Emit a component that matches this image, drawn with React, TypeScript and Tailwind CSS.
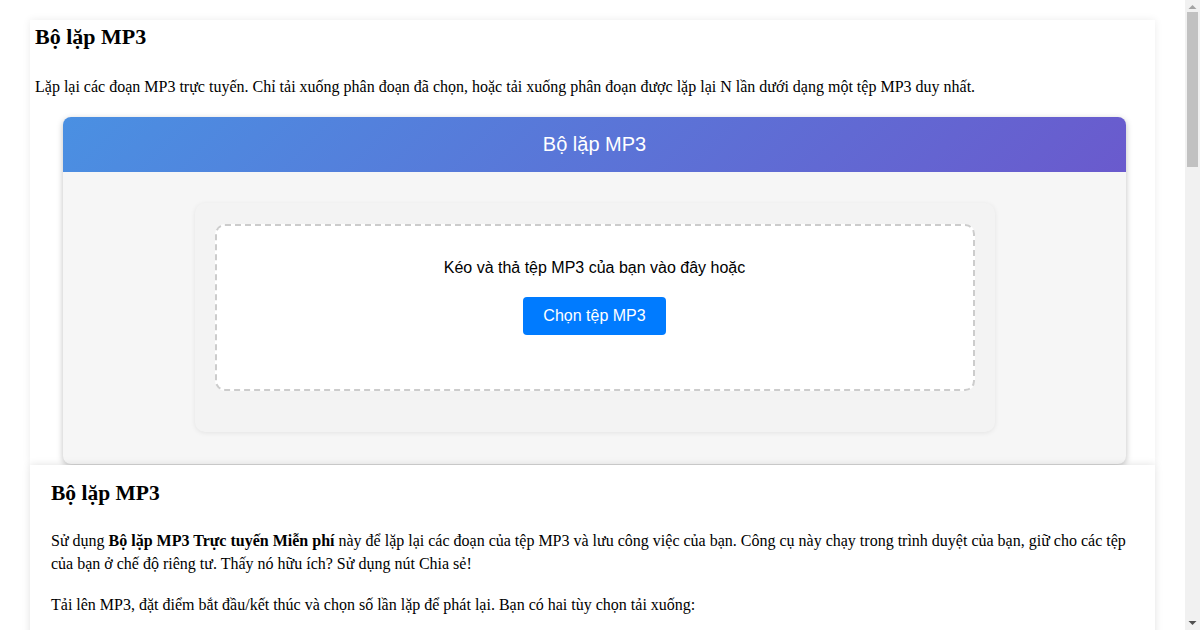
function ScrollGutter() {
  return (
    <div className="flex h-screen w-[15px] shrink-0 flex-col items-center bg-[#f1f1f1]">
      <svg width="9" height="12" viewBox="0 0 9 12" className="shrink-0">
        <path d="M0.5 9 L4.5 5 L8.5 9 Z" fill="#a3a3a3" />
      </svg>
      <div className="h-[155px] w-[11px] shrink-0 bg-[#c1c1c1]" />
      <div className="flex-1" />
      <svg width="9" height="12" viewBox="0 0 9 12" className="shrink-0">
        <path d="M0.5 3 L4.5 7 L8.5 3 Z" fill="#505050" />
      </svg>
    </div>
  );
}

export default function App() {
  return (
    <div className="flex h-screen bg-white font-['Liberation_Serif',serif] text-black">
      <div className="h-screen flex-1 overflow-y-auto [scrollbar-width:none]">
        <div className="pt-[20px] pb-[40px]">
          {/* Tool section */}
          <section className="mx-auto w-[1125px] bg-white px-[5px] pt-[3px] pb-[1px] shadow-[0_0_8px_rgba(0,0,0,0.08)]">
            <h2 className="text-[22px] font-bold leading-[28px]">Bộ lặp MP3</h2>
            <p className="mt-[27px] text-[16px] leading-[18px]">
              Lặp lại các đoạn MP3 trực tuyến. Chỉ tải xuống phân đoạn đã chọn, hoặc tải xuống phân đoạn được lặp lại N lần dưới dạng một tệp MP3 duy nhất.
            </p>

            <div className="mt-[21px] ml-[28px] w-[1063px] overflow-hidden rounded-[8px] bg-[#f6f6f6] shadow-[0_2px_6px_rgba(0,0,0,0.25)] font-['Liberation_Sans',Arial,sans-serif]">
              <div className="flex h-[55px] items-center justify-center bg-[linear-gradient(135deg,#4a90e2,#6a5acd)] pb-[2px]">
                <h1 className="text-[20px] text-white">Bộ lặp MP3</h1>
              </div>
              <div className="px-[31px] pt-[31px] pb-[32px]">
                <div className="mx-auto w-[800px] rounded-[10px] bg-[#f3f3f3] px-[20px] pt-[21px] pb-[41px] shadow-[0_1px_5px_rgba(0,0,0,0.08)]">
                  <div className="flex h-[167px] flex-col items-center rounded-[10px] border-2 border-dashed border-[#cccccc] bg-white pt-[33px]">
                    <p className="text-[16px] leading-[18px]">Kéo và thả tệp MP3 của bạn vào đây hoặc</p>
                    <button className="mt-[20px] h-[38px] rounded-[4px] bg-[#007bff] px-[20px] text-[16px] text-white">
                      Chọn tệp MP3
                    </button>
                  </div>
                </div>
              </div>
            </div>
          </section>

          {/* Article section */}
          <article className="mx-auto w-[1125px] bg-white px-[21px] pt-[14px] pb-[30px] text-[16px] leading-[23px] shadow-[0_0_8px_rgba(0,0,0,0.12)]">
            <h2 className="text-[21.5px] font-bold leading-[28px]">Bộ lặp MP3</h2>
            <p className="mt-[22px]">
              Sử dụng <strong>Bộ lặp MP3 Trực tuyến Miễn phí</strong> này để lặp lại các đoạn của tệp MP3 và lưu công việc của bạn. Công cụ này chạy trong trình duyệt của bạn, giữ cho các tệp của bạn ở chế độ riêng tư. Thấy nó hữu ích? Sử dụng nút Chia sẻ!
            </p>
            <p className="mt-[18px]">
              Tải lên MP3, đặt điểm bắt đầu/kết thúc và chọn số lần lặp để phát lại. Bạn có hai tùy chọn tải xuống:
            </p>
            <ul className="mt-[16px] list-disc pl-[40px]">
              <li><strong>Tải xuống phân đoạn:</strong> chỉ lưu phần đã chọn của tệp MP3.</li>
              <li><strong>Tải xuống bản lặp:</strong> lưu phân đoạn được lặp lại N lần dưới dạng một tệp MP3 duy nhất.</li>
            </ul>

            <h3 className="mt-[24px] text-[19px] font-bold">Cách sử dụng Bộ lặp MP3</h3>
            <ol className="mt-[16px] list-decimal pl-[40px]">
              <li>Kéo và thả tệp MP3 của bạn vào vùng tải lên hoặc nhấp vào nút Chọn tệp MP3.</li>
              <li>Đợi tệp được tải và hiển thị dạng sóng âm thanh.</li>
              <li>Đặt thời điểm bắt đầu và kết thúc của đoạn bạn muốn lặp lại.</li>
              <li>Nhập số lần lặp lại mong muốn.</li>
              <li>Nhấn Phát để nghe thử đoạn được lặp lại.</li>
              <li>Chọn Tải xuống phân đoạn hoặc Tải xuống bản lặp để lưu kết quả.</li>
            </ol>

            <h3 className="mt-[24px] text-[19px] font-bold">Tính năng</h3>
            <ul className="mt-[16px] list-disc pl-[40px]">
              <li>Hoàn toàn miễn phí, không cần đăng ký.</li>
              <li>Xử lý ngay trong trình duyệt, tệp không được tải lên máy chủ.</li>
              <li>Điều chỉnh chính xác điểm bắt đầu và kết thúc.</li>
              <li>Lặp lại đoạn âm thanh với số lần tùy chọn.</li>
              <li>Xuất kết quả dưới dạng tệp MP3 duy nhất.</li>
            </ul>

            <h3 className="mt-[24px] text-[19px] font-bold">Câu hỏi thường gặp</h3>
            {[
              ['Tệp của tôi có an toàn không?', 'Có. Mọi xử lý đều diễn ra trên thiết bị của bạn, tệp không bao giờ rời khỏi trình duyệt.'],
              ['Tôi có thể lặp lại bao nhiêu lần?', 'Bạn có thể chọn số lần lặp tùy ý, tuy nhiên tệp càng dài thì thời gian xử lý càng lâu.'],
              ['Công cụ hỗ trợ định dạng nào?', 'Công cụ này được thiết kế cho tệp MP3.'],
              ['Tôi có thể dùng trên điện thoại không?', 'Có, công cụ hoạt động trên hầu hết các trình duyệt hiện đại trên máy tính và điện thoại.'],
            ].map(([q, a]) => (
              <div key={q} className="mt-[16px]">
                <p className="font-bold">{q}</p>
                <p className="mt-[8px]">{a}</p>
              </div>
            ))}
          </article>
        </div>
      </div>
      <ScrollGutter />
    </div>
  );
}
